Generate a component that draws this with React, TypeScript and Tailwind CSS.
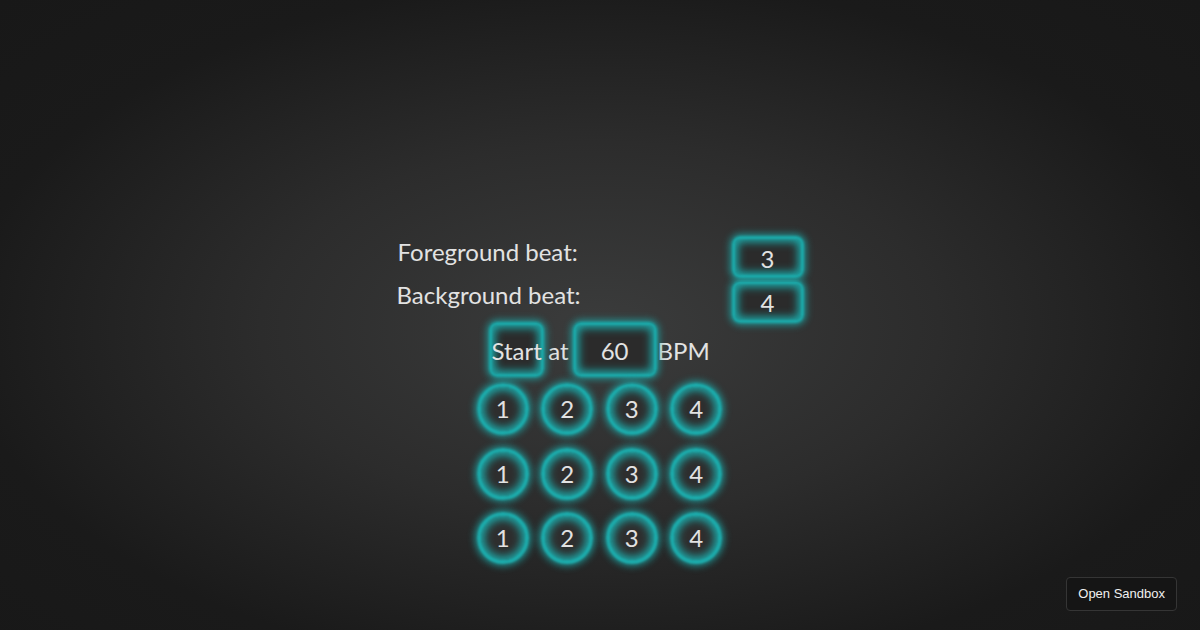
import React from "react";

function Glow({ round }: { round?: boolean }) {
  return (
    <span
      className={`pointer-events-none absolute inset-0 ${round ? "rounded-full border-[4px]" : "rounded-[8px] border-[3px]"} border-[#1cadad] shadow-[0_0_7px_2px_#1cadadcc,inset_0_0_9px_3px_#1cadad] blur-[0.8px]`}
    />
  );
}

const boxBase = "relative bg-[#2b2b2b] flex items-center justify-center";

function Circle({ n }: { n: number }) {
  return (
    <div className="relative w-[52px] h-[52px] rounded-full flex items-center justify-center text-[24px] text-[#e2e2e2] bg-[#2e2e2e]">
      <Glow round />
      <span className="relative">{n}</span>
    </div>
  );
}

export default function App() {
  return (
    <div
      className="relative w-[1200px] h-[630px] overflow-hidden bg-[radial-gradient(ellipse_at_50%_52%,#3b3c3c_0%,#2c2c2c_40%,#1a1a1a_75%,#181818_100%)] text-[#e2e2e2]"
      style={{ fontFamily: "Lato, 'Open Sans', sans-serif" }}
    >
      <div className="flex flex-col items-center pt-[236px]">
        <div className="w-[407px] flex flex-col gap-[3px]">
          <div className="flex justify-between items-start">
            <span className="text-[24px] leading-[32px] pl-[1px]">Foreground beat:</span>
            <div className={`w-[72px] h-[42px] rounded-[8px] text-[24px] pt-[3px] ${boxBase}`}>
              <Glow />
              <span className="relative">3</span>
            </div>
          </div>
          <div className="flex justify-between items-start">
            <span className="text-[24px] leading-[28px]">Background beat:</span>
            <div className={`w-[72px] h-[42px] rounded-[8px] text-[24px] pt-[1px] ${boxBase}`}>
              <Glow />
              <span className="relative">4</span>
            </div>
          </div>
        </div>
        <div className="flex items-center mt-[-1px] ml-[-1px] text-[24px]">
          <button className={`w-[55px] h-[55px] rounded-[8px] text-[24px] text-[#e2e2e2] leading-none pt-[3px] ${boxBase}`}>
            <Glow />
            <span className="relative whitespace-nowrap">Start</span>
          </button>
          <span className="ml-[4px] mr-[4px] pt-[3px]">at</span>
          <div className={`w-[84px] h-[55px] rounded-[8px] pt-[3px] ${boxBase}`}>
            <Glow />
            <span className="relative">60</span>
          </div>
          <span className="ml-[1px] pt-[3px]">BPM</span>
        </div>
        <div className="grid grid-cols-4 gap-x-[12.5px] gap-y-[12.5px] mt-[6px] ml-[-1px]">
          {[0, 1, 2].map((r) =>
            [1, 2, 3, 4].map((n) => <Circle key={`${r}-${n}`} n={n} />)
          )}
        </div>
      </div>
      <button
        className="absolute right-[23px] bottom-[19px] h-[34px] px-[11px] rounded-[4px] bg-[#151515] border border-[#353535] text-[13px] text-[#f0f0f0]"
        style={{ fontFamily: "'Liberation Sans', Arial, sans-serif" }}
      >
        Open Sandbox
      </button>
    </div>
  );
}
